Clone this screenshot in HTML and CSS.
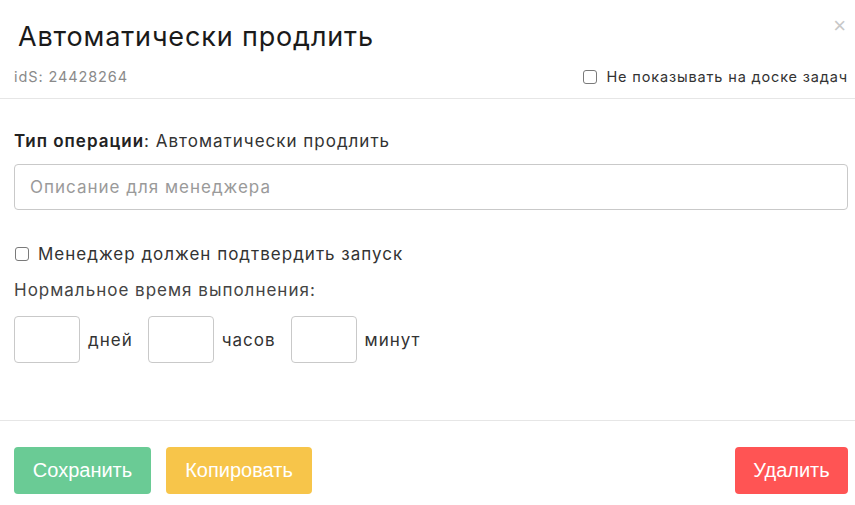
FILE: index.html
```html
<!DOCTYPE html>
<html lang="ru">
<head>
<meta charset="utf-8">
<link rel="stylesheet" href="styles.css">
</head>
<body>
<div class="modal">
  <header class="modal-header">
    <div class="title-row">
      <h1 class="title">Автоматически продлить</h1>
      <span class="close">×</span>
    </div>
    <div class="meta-row">
      <span class="ids">idS: 24428264</span>
      <label class="check check-small"><span class="box"></span>Не показывать на доске задач</label>
    </div>
  </header>
  <section class="modal-body">
    <div class="op-type"><b>Тип операции</b>: Автоматически продлить</div>
    <div class="text-input">Описание для менеджера</div>
    <label class="check check-main"><span class="box"></span>Менеджер должен подтвердить запуск</label>
    <div class="label">Нормальное время выполнения:</div>
    <div class="time-row">
      <span class="num-input"></span><span class="unit">дней</span>
      <span class="num-input"></span><span class="unit">часов</span>
      <span class="num-input"></span><span class="unit">минут</span>
    </div>
  </section>
  <footer class="modal-footer">
    <button class="btn btn-green">Сохранить</button>
    <button class="btn btn-yellow">Копировать</button>
    <span class="spacer"></span>
    <button class="btn btn-red">Удалить</button>
  </footer>
</div>
</body>
</html>
```
FILE: styles.css
```css
* { box-sizing: border-box; }
html, body { margin: 0; background: #fff; }
body { font-family: Inter, "Noto Sans", sans-serif; color: #222; width: 855px; height: 505px; overflow: hidden; }
.modal { display: flex; flex-direction: column; }
.modal-header { border-bottom: 1px solid #e6e6e6; padding: 0 7px 0 14px; height: 99px; }
.title-row { display: flex; justify-content: space-between; align-items: flex-start; padding-top: 18px; }
.title { margin: 0 0 0 4px; font-weight: 400; font-size: 27px; line-height: 38px; color: #1a1a1a; letter-spacing: 0.85px; }
.close { color: #c8c8c8; font-size: 22px; line-height: 20px; margin-top: -2px; margin-right: 2px; font-family: "Liberation Sans", sans-serif; }
.meta-row { display: flex; justify-content: space-between; align-items: center; margin-top: 12px; }
.ids { color: #8a8a8a; font-size: 14.5px; letter-spacing: 0.9px; }
.check { display: flex; align-items: center; }
.box { display: inline-block; width: 14px; height: 14px; border: 1px solid #7a7a7a; border-radius: 3px; background: #fff; flex: none; }
.check-small { font-size: 14.5px; color: #333; gap: 9px; letter-spacing: 0.85px; }
.modal-body { padding: 31px 7px 0 14px; height: 322px; border-bottom: 1px solid #e6e6e6; }
.op-type { font-size: 17px; color: #333; line-height: 22px; letter-spacing: 1px; }
.op-type b { font-weight: 600; color: #222; }
.text-input { margin-top: 12px; height: 46px; border: 1px solid #c9c9c9; border-radius: 4px; padding-left: 15px; display: flex; align-items: center; color: #9a9a9a; font-size: 17px; letter-spacing: 1px; }
.check-main { margin-top: 33px; font-size: 17px; color: #333; gap: 9px; line-height: 22px; letter-spacing: 1px; }
.check-main .box { margin-left: 1px; }
.label { margin-top: 14px; font-size: 17px; color: #444; line-height: 22px; letter-spacing: 1px; }
.time-row { display: flex; align-items: center; margin-top: 15px; }
.num-input { width: 66px; height: 47px; border: 1px solid #c9c9c9; border-radius: 4px; }
.unit { font-size: 17px; color: #333; margin: 0 15px 0 8px; letter-spacing: 1px; }
.modal-footer { display: flex; align-items: center; padding: 26px 7px 0 14px; gap: 15px; }
.spacer { flex: 1; }
.btn { border: 0; border-radius: 4px; height: 47px; font-family: "Liberation Sans", Arial, sans-serif; font-size: 20px; color: #fff; padding: 0; cursor: pointer; }
.btn-green { background: #6acb95; width: 137px; }
.btn-yellow { background: #f7c54a; width: 146px; }
.btn-red { background: #ff5454; width: 113px; }
```
